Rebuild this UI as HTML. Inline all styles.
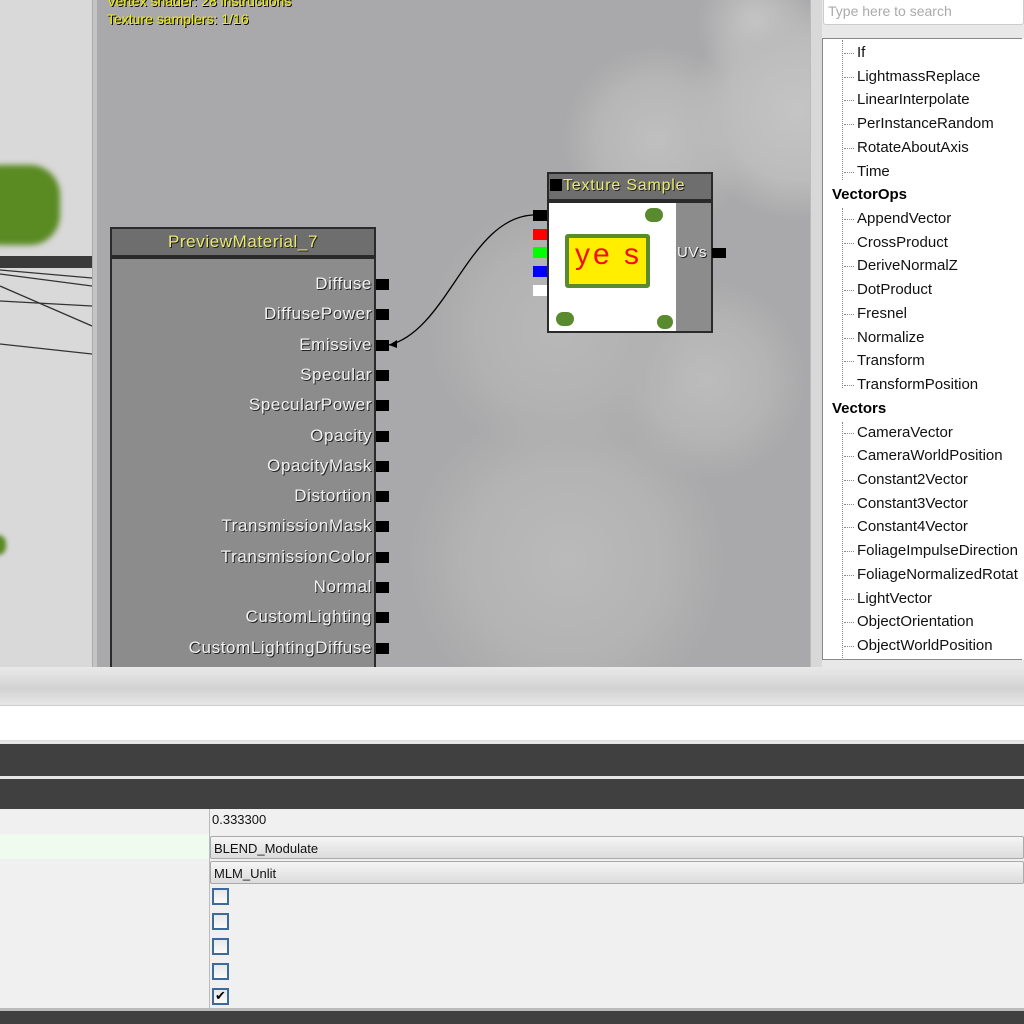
<!DOCTYPE html>
<html><head><meta charset="utf-8"><style>
*{margin:0;padding:0;box-sizing:border-box}
body{width:1024px;height:1024px;overflow:hidden;background:#e6e6e6;font-family:"Liberation Sans","DejaVu Sans",sans-serif;position:relative}
.a{position:absolute}
.lbl{position:absolute;right:0;color:#f2f2f2;font-size:17px;text-shadow:1px 1px 0 #222;white-space:nowrap;letter-spacing:0.6px}
.tr{position:absolute;left:857px;font-size:15px;color:#111;white-space:nowrap}
.tc{position:absolute;left:832px;font-size:15px;font-weight:bold;color:#000}
.dot{position:absolute;left:844px;width:10px;border-top:1px dotted #888}
.cb{position:absolute;left:212px;width:17px;height:17px;border:2px solid #3c6a9a;background:linear-gradient(#e8e8e8,#fafafa)}
</style></head><body>
<div class="a" style="left:0;top:0;width:92px;height:667px;background:#d9d9d9"></div>
<div class="a" style="left:-30px;top:165px;width:90px;height:80px;background:#5a8a22;border-radius:30px;filter:blur(3px)"></div>
<div class="a" style="left:-10px;top:535px;width:16px;height:20px;background:#5a8a22;border-radius:8px;filter:blur(2px)"></div>
<div class="a" style="left:0;top:256px;width:92px;height:12px;background:#3a3a3a"></div>
<svg class="a" style="left:0;top:256px" width="92" height="110"><g stroke="#333" stroke-width="1.3" fill="none"><path d="M0 14 L92 22"/><path d="M0 18 L92 30"/><path d="M0 30 L92 70"/><path d="M0 45 L92 50"/><path d="M0 88 L92 98"/></g></svg>
<div class="a" style="left:92px;top:0;width:5px;height:667px;background:#c4c4c4;border-left:1px solid #aaa"></div>
<div class="a" style="left:97px;top:0;width:713px;height:667px;overflow:hidden;background:
radial-gradient(circle at 700px 110px,#c4c4c4 0,#bcbcbc 70px,rgba(0,0,0,0) 110px),
radial-gradient(circle at 460px 330px,#b8b8b8 0,#b2b2b2 80px,rgba(0,0,0,0) 130px),
radial-gradient(circle at 560px 140px,#bfbfbf 0,#b6b6b6 60px,rgba(0,0,0,0) 95px),
radial-gradient(circle at 610px 380px,#bcbcbc 0,#b4b4b4 60px,rgba(0,0,0,0) 100px),
radial-gradient(circle at 470px 560px,#bababa 0,#b3b3b3 100px,rgba(0,0,0,0) 160px),
radial-gradient(circle at 660px 25px,#c8c8c8 0,rgba(0,0,0,0) 60px),
#a9a8aa">
<!-- PreviewMaterial node -->
<div class="a" style="left:13px;top:227px;width:266px;height:30px;background:#6e6e6e;border:2px solid #2a2a2a"></div>
<div class="a" style="left:13px;top:232px;width:266px;text-align:center;color:#eaea70;font-size:17px;text-shadow:1px 1px 0 #222;letter-spacing:0.6px">PreviewMaterial_7</div>
<div class="a" style="left:13px;top:257px;width:266px;height:420px;background:#8c8c8c;border:2px solid #2a2a2a"></div>
</div>
<div class="a" style="left:107px;top:-8px;color:#f0f000;font-size:14px;text-shadow:1px 1px 0 #000;line-height:18px">Vertex shader: 28 instructions<br>Texture samplers: 1/16</div>
<div class="a" style="left:810px;top:0;width:12px;height:667px;background:#d8d8d8;border-left:1px solid #bbb"></div>
<div class="a" style="left:822px;top:0;width:202px;height:667px;background:#e8e8e8"></div>
<div class="a" style="left:823px;top:-2px;width:201px;height:27px;background:#fff;border:1px solid #ccc;border-radius:3px"></div>
<div class="a" style="left:828px;top:3px;font-size:14px;color:#aaa">Type here to search</div>
<div class="a" style="left:822px;top:38px;width:202px;height:622px;background:#fff;border:1px solid #888"></div>
<div class="a" style="left:842px;top:40px;height:140px;border-left:1px dotted #888"></div>
<div class="a" style="left:842px;top:208px;height:180px;border-left:1px dotted #888"></div>
<div class="a" style="left:842px;top:422px;height:238px;border-left:1px dotted #888"></div>
<div id="tree"></div>
<div class="a" style="left:0;top:667px;width:1024px;height:36px;background:linear-gradient(#e9e9e9,#d2d2d2 60%,#e4e4e4)"></div>
<div class="a" style="left:0;top:705px;width:1024px;height:36px;background:#fff;border-top:1px solid #ccc;border-bottom:1px solid #ddd"></div>
<div class="a" style="left:0;top:744px;width:1024px;height:32px;background:#404040"></div>
<div class="a" style="left:0;top:779px;width:1024px;height:30px;background:#404040"></div>
<div class="a" style="left:0;top:809px;width:1024px;height:199px;background:#f0f0f0"></div>
<div class="a" style="left:0;top:834px;width:210px;height:25px;background:#effbee"></div>
<div class="a" style="left:209px;top:809px;width:1px;height:199px;background:#bbb"></div>
<div class="a" style="left:212px;top:812px;font-size:13px;color:#111">0.333300</div>
<div class="a" style="left:210px;top:836px;width:814px;height:23px;background:linear-gradient(#f5f5f5,#dcdcdc);border:1px solid #aaa;border-radius:2px"></div>
<div class="a" style="left:214px;top:841px;font-size:13px;color:#111">BLEND_Modulate</div>
<div class="a" style="left:210px;top:861px;width:814px;height:23px;background:linear-gradient(#f5f5f5,#dcdcdc);border:1px solid #aaa;border-radius:2px"></div>
<div class="a" style="left:214px;top:866px;font-size:13px;color:#111">MLM_Unlit</div>
<div class="cb" style="top:888px"></div><div class="cb" style="top:913px"></div><div class="cb" style="top:938px"></div><div class="cb" style="top:963px"></div><div class="cb" style="top:988px"></div>
<div class="a" style="left:215px;top:988px;font-size:13px;font-weight:bold;color:#000">✔</div>
<div class="a" style="left:0;top:1008px;width:1024px;height:16px;background:#404040;border-top:3px solid #bbb"></div>
<svg class="a" style="left:0;top:0" width="1024" height="700"><path d="M389 345 C450 330,470 210,540 215" stroke="#000" stroke-width="1.3" fill="none"/><path d="M389 345 l8 -5 l0 8z" fill="#000"/></svg>
<div class="a" id="lbls" style="left:110px;top:0;width:262px;height:667px"></div>
<div class="a" style="left:547px;top:172px;width:166px;height:29px;background:#6e6e6e;border:2px solid #2a2a2a"></div>
<div class="a" style="left:550px;top:179px;width:12px;height:12px;background:#000"></div>
<div class="a" style="left:563px;top:177px;color:#eaea70;font-size:16px;text-shadow:1px 1px 0 #222;letter-spacing:0.8px">Texture Sample</div>
<div class="a" style="left:547px;top:201px;width:166px;height:132px;background:#8c8c8c;border:2px solid #2a2a2a"></div>
<div class="a" style="left:549px;top:203px;width:127px;height:128px;background:#fff"></div>
<div class="a" style="left:645px;top:208px;width:18px;height:14px;background:#5a8a2e;border-radius:7px"></div>
<div class="a" style="left:556px;top:312px;width:18px;height:14px;background:#5a8a2e;border-radius:7px"></div>
<div class="a" style="left:657px;top:315px;width:16px;height:14px;background:#5a8a2e;border-radius:7px"></div>
<div class="a" style="left:565px;top:234px;width:85px;height:54px;background:#ffee00;border:4px solid #5a8a2e;border-radius:3px"></div>
<div class="a" style="left:575px;top:238px;color:#f01010;font-size:30px;font-family:'Liberation Sans',sans-serif;letter-spacing:3px">ye s</div>
<div class="lbl" style="left:677px;top:244px;right:auto;font-size:15px">UVs</div>
<div class="a" style="left:712px;top:248px;width:14px;height:10px;background:#000"></div>
<div class="a" style="left:533px;top:210px;width:14px;height:11px;background:#000"></div>
<div class="a" style="left:533px;top:229px;width:14px;height:11px;background:#f00"></div>
<div class="a" style="left:533px;top:247px;width:14px;height:11px;background:#0f0"></div>
<div class="a" style="left:533px;top:266px;width:14px;height:11px;background:#00f"></div>
<div class="a" style="left:533px;top:285px;width:14px;height:11px;background:#fff"></div>
<script>
var L=["Diffuse","DiffusePower","Emissive","Specular","SpecularPower","Opacity","OpacityMask","Distortion","TransmissionMask","TransmissionColor","Normal","CustomLighting","CustomLightingDiffuse"];
var h="";L.forEach(function(t,i){var y=284+i*30.3;h+='<div class="lbl" style="top:'+(y-10)+'px">'+t+'</div><div class="a" style="left:266px;top:'+(y-5)+'px;width:13px;height:11px;background:#000"></div>';});
document.getElementById("lbls").innerHTML=h;
var T=[["If",0],["LightmassReplace",0],["LinearInterpolate",0],["PerInstanceRandom",0],["RotateAboutAxis",0],["Time",0],["VectorOps",1],["AppendVector",0],["CrossProduct",0],["DeriveNormalZ",0],["DotProduct",0],["Fresnel",0],["Normalize",0],["Transform",0],["TransformPosition",0],["Vectors",1],["CameraVector",0],["CameraWorldPosition",0],["Constant2Vector",0],["Constant3Vector",0],["Constant4Vector",0],["FoliageImpulseDirection",0],["FoliageNormalizedRotat",0],["LightVector",0],["ObjectOrientation",0],["ObjectWorldPosition",0]];
var g="";T.forEach(function(t,i){var y=52+i*23.72;if(t[1])g+='<div class="tc" style="top:'+(y-8)+'px">'+t[0]+'</div>';else g+='<div class="dot" style="top:'+(y+1)+'px"></div><div class="tr" style="top:'+(y-8)+'px">'+t[0]+'</div>';});
document.getElementById("tree").innerHTML=g;
</script>
<div class="a" style="left:1022px;top:38px;width:2px;height:622px;background:#fff"></div>
</body></html>
